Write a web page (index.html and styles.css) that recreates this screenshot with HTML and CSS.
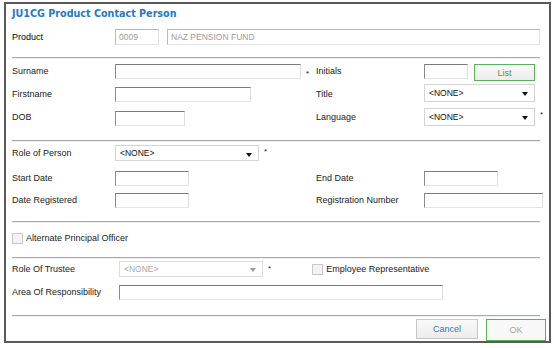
FILE: index.html
```html
<!DOCTYPE html>
<html lang="en">

<head>
    <meta charset="UTF-8">
    <meta name="viewport" content="width=device-width, initial-scale=1.0">
    <title>JU1CG Product Contact Person</title>
    <link rel="stylesheet" href="styles.css">
</head>

<body>

<div class="dialog">
    <h2 class="title">JU1CG Product Contact Person</h2>

    <div class="row row-product">
        <span class="label label-strong">Product</span>
        <input class="field field-code" type="text" value="0009" disabled>
        <input class="field field-name" type="text" value="NAZ PENSION FUND" disabled>
    </div>

    <div class="sep sep-1"></div>

    <div class="row row-surname">
        <span class="label">Surname</span>
        <div class="cell">
            <input class="field w-surname" type="text">
            <span class="req">*</span>
        </div>
        <span class="label label-r">Initials</span>
        <input class="field w-initials" type="text">
        <button class="btn btn-list">List</button>
    </div>
    <div class="row row-firstname">
        <span class="label">Firstname</span>
        <div class="cell">
            <input class="field w-firstname" type="text">
        </div>
        <span class="label label-r">Title</span>
        <div class="select w-select-r">&lt;NONE&gt;</div>
    </div>
    <div class="row row-dob">
        <span class="label">DOB</span>
        <div class="cell">
            <input class="field w-dob" type="text">
        </div>
        <span class="label label-r">Language</span>
        <div class="select w-select-r">&lt;NONE&gt;</div>
        <span class="req">*</span>
    </div>

    <div class="sep sep-2"></div>

    <div class="row row-role">
        <span class="label">Role of Person</span>
        <div class="select w-role">&lt;NONE&gt;</div>
        <span class="req">*</span>
    </div>
    <div class="row row-start">
        <span class="label">Start Date</span>
        <div class="cell">
            <input class="field w-date" type="text">
        </div>
        <span class="label label-r">End Date</span>
        <input class="field w-date" type="text">
    </div>
    <div class="row row-registered">
        <span class="label">Date Registered</span>
        <div class="cell">
            <input class="field w-date" type="text">
        </div>
        <span class="label label-r">Registration Number</span>
        <input class="field w-regno" type="text">
    </div>

    <div class="sep sep-3"></div>

    <div class="row row-check">
        <label class="check"><span class="box"></span>Alternate Principal Officer</label>
    </div>

    <div class="sep sep-4"></div>

    <div class="row row-trustee">
        <span class="label label-wide">Role Of Trustee</span>
        <div class="select select-off w-trustee">&lt;NONE&gt;</div>
        <span class="req">*</span>
        <label class="check check-emp"><span class="box"></span>Employee Representative</label>
    </div>
    <div class="row row-area">
        <span class="label label-wide">Area Of Responsibility</span>
        <input class="field w-area" type="text">
    </div>

    <div class="sep sep-5"></div>

    <div class="actions">
        <button class="btn btn-cancel">Cancel</button>
        <button class="btn btn-ok">OK</button>
    </div>
</div>

</body>
</html>
```

FILE: styles.css
```css
body {
    margin: 0;
    background-color: #fff;
    font-family: "Liberation Sans", Arial, sans-serif;
    font-size: 9px;
    color: #222;
}

.dialog {
    box-sizing: border-box;
    width: 547px;
    height: 341px;
    margin: 2px 0 0 4px;
    border: 2px solid #5a5a5a;
    padding: 0 9px 0 6px;
    display: flex;
    flex-direction: column;
}

.title {
    margin: 0;
    height: 20px;
    line-height: 20px;
    font-family: "DejaVu Sans", Verdana, sans-serif;
    font-size: 9.6px;
    font-weight: bold;
    color: #1f7bc4;
}

.row {
    display: flex;
    align-items: center;
}

.label {
    width: 103px;
    flex: none;
}

.label-strong {
    color: #000;
}

.label-r {
    width: 108px;
}

.label-wide {
    width: 107px;
}

.cell {
    width: 201px;
    flex: none;
    display: flex;
    align-items: center;
}

.req {
    margin-left: 5px;
    font-size: 8px;
    align-self: flex-start;
    margin-top: 5px;
}

.field {
    box-sizing: border-box;
    height: 15px;
    margin: 0;
    padding: 0 3px;
    border: 1px solid;
    border-color: #7b7b7b #dedede #e4e4e4 #8a8a8a;
    background-color: #fff;
    font-family: inherit;
    font-size: 8.5px;
    color: #999;
}

.field:disabled {
    background-color: #fff;
    border-color: #b4b4b4 #e2e2e2 #e6e6e6 #bdbdbd;
    color: #9c9c9c;
    height: 16px;
}

/* rows */
.row-product { height: 26px; }
.row-surname { height: 24px; }
.row-firstname { height: 22px; }
.row-dob { height: 24px; }
.row-role { height: 22px; }
.row-start { height: 28px; }
.row-registered { height: 16px; }
.row-check { height: 30px; }
.row-trustee { height: 20px; }
.row-area { height: 26px; }

.field-code { width: 44px; }
.field-name { width: 376px; margin-left: 8px; }

.w-surname { width: 186px; }
.w-initials { width: 44px; }
.w-firstname { width: 136px; }
.w-dob { width: 70px; }
.w-date { width: 74px; }
.w-regno { width: 122px; }
.w-area { width: 324px; }

.row-dob .w-dob { margin-top: 3px; }

/* separators */
.sep {
    flex: none;
    border-top: 1px solid #a9a9a9;
    border-bottom: 1px solid #efefef;
}

.sep-1 { margin-top: 7px; }
.sep-2 { margin-top: 11px; }
.sep-3 { margin-top: 13px; }
.sep-4 { margin-top: 4px; }
.sep-5 { margin-top: 10px; }

/* selects */
.select {
    box-sizing: border-box;
    position: relative;
    height: 18px;
    line-height: 16px;
    padding-left: 4px;
    border: 1px solid #d4d4d4;
    background-color: #fff;
    font-size: 8.5px;
    color: #111;
    flex: none;
}

.select::after {
    content: "";
    position: absolute;
    right: 6px;
    top: 7px;
    border-left: 3px solid transparent;
    border-right: 3px solid transparent;
    border-top: 4px solid #111;
}

.w-select-r { width: 111px; }
.w-role { width: 144px; height: 16px; line-height: 14px; }
.w-trustee { width: 144px; height: 16px; line-height: 14px; }

.row-firstname .select { margin-top: -2px; }

.select-off {
    color: #a8a8a8;
    border-color: #dcdcdc;
}

.select-off::after {
    top: 6px;
    border-top-color: #9a9a9a;
}

.row-dob .req,
.row-role .req,
.row-trustee .req {
    margin-left: 5px;
}

/* checkboxes */
.check {
    display: flex;
    align-items: center;
    font-size: 9px;
}

.box {
    box-sizing: border-box;
    width: 11px;
    height: 11px;
    margin-right: 3px;
    border: 1px solid #c8c8c8;
    background-color: #f3f3f3;
}

.check-emp {
    margin-left: 41px;
}

/* buttons */
button {
    font-family: inherit;
}

.btn {
    box-sizing: border-box;
    margin: 0;
    padding: 0;
    border: 1px solid #c6c6c6;
    background: linear-gradient(#f9f9f9, #ececec);
    font-size: 9px;
    cursor: pointer;
}

.btn-list {
    width: 61px;
    height: 17px;
    margin-left: 6px;
    margin-top: 3px;
    border-color: #58b05a;
    color: #3f9a3f;
}

.actions {
    display: flex;
    justify-content: flex-end;
    gap: 8px;
    margin-top: 2px;
    margin-right: -6px;
}

.btn-cancel {
    width: 62px;
    height: 20px;
    color: #2c7ab9;
}

.btn-ok {
    width: 60px;
    height: 22px;
    border-color: #5bb25d;
    background: #f8f8f8;
    color: #a6a6a6;
}
```
